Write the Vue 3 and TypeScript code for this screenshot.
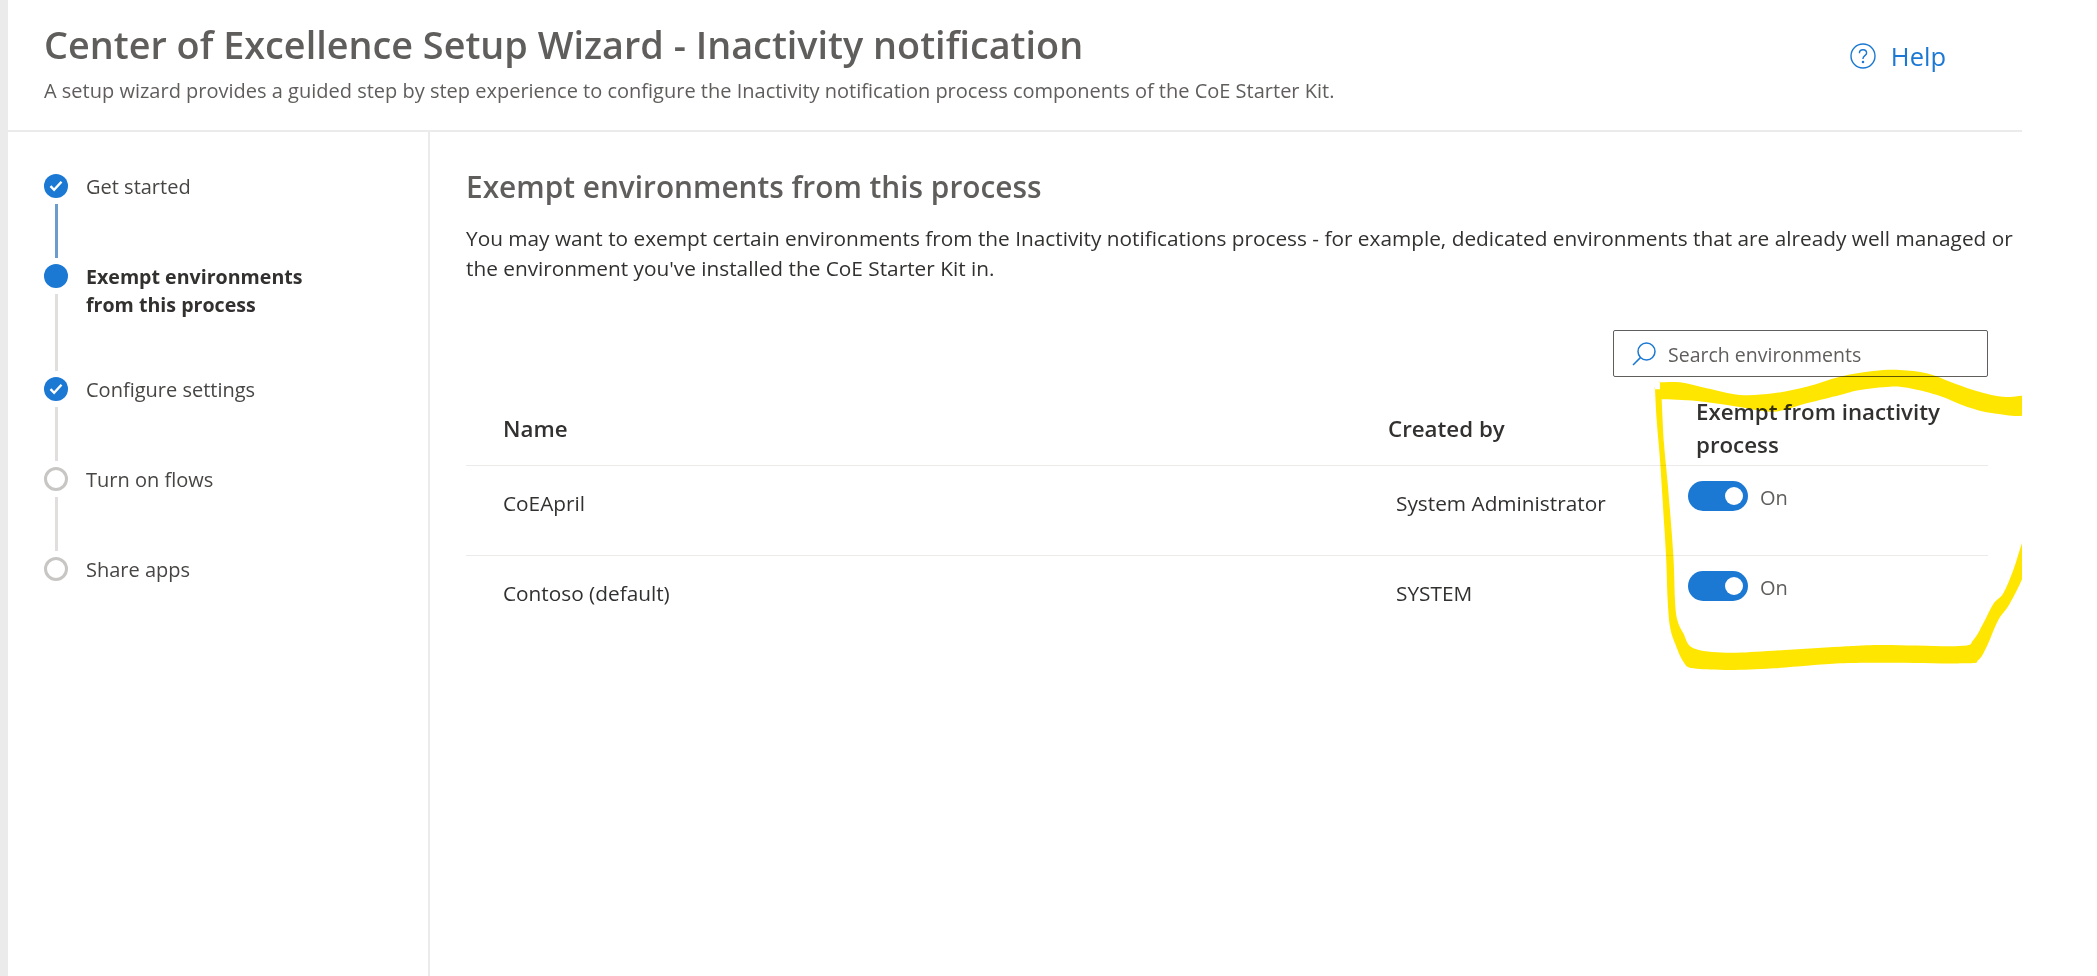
<template>
  <div class="page">
    <header class="top">
      <div>
        <h1>Center of Excellence Setup Wizard - Inactivity notification</h1>
        <p class="sub">A setup wizard provides a guided step by step experience to configure the Inactivity notification process components of the CoE Starter Kit.</p>
      </div>
      <a class="help">
        <svg width="26" height="26" viewBox="0 0 26 26" fill="none" stroke="#1b78d3" stroke-width="1.4">
          <circle cx="13" cy="13" r="12" />
          <path d="M9.4 10.2c0-2.1 1.6-3.5 3.6-3.5s3.6 1.3 3.6 3.2c0 2.7-3.6 2.8-3.6 5.6v.6" />
          <circle cx="13" cy="19" r="0.6" fill="#1b78d3" />
        </svg>
        Help
      </a>
    </header>

    <div class="body">
      <nav class="steps">
        <div v-for="(s, i) in steps" :key="s.label" class="step" :class="{ tall: s.current }">
          <div class="rail">
            <span class="dot" :class="s.state">
              <svg v-if="s.state === 'done'" width="14" height="12" viewBox="0 0 14 12" fill="none" stroke="#fff" stroke-width="2.4">
                <path d="M1.5 6.2l3.6 3.6 7.4-8" />
              </svg>
            </span>
            <span v-if="i < steps.length - 1" class="link" :class="{ passed: i === 0 }"></span>
          </div>
          <span class="label" :class="{ current: s.current }">{{ s.label }}</span>
        </div>
      </nav>

      <main class="content">
        <h2>Exempt environments from this process</h2>
        <p class="intro">You may want to exempt certain environments from the Inactivity notifications process - for example, dedicated environments that are already well managed or<br />the environment you've installed the CoE Starter Kit in.</p>

        <div class="table-wrap">
          <div class="search">
            <svg width="24" height="24" viewBox="0 0 24 24" fill="none" stroke="#1b78d3" stroke-width="1.5">
              <circle cx="14.5" cy="9.5" r="8.5" />
              <path d="M8.4 15.6L1 23" />
            </svg>
            <input type="text" placeholder="Search environments" />
          </div>

          <div class="row head">
            <div class="name">Name</div>
            <div>Created by</div>
            <div class="pad">Exempt from inactivity process</div>
          </div>
          <div v-for="env in environments" :key="env.name" class="row">
            <div class="name">{{ env.name }}</div>
            <div class="pad">{{ env.owner }}</div>
            <div class="toggle-cell">
              <span class="toggle"><span class="knob"></span></span>
              <span class="on">On</span>
            </div>
          </div>
        </div>
      </main>
    </div>

    <!-- yellow marker scribble on top of the screenshot -->
    <svg class="marker" width="422" height="400" viewBox="0 0 1266 1200">
      <path :d="markerPath" fill="#ffe600" />
    </svg>
  </div>
</template>

<script setup lang="ts">
type Step = { label: string; state: 'done' | 'active' | 'todo'; current?: boolean }

const steps: Step[] = [
  { label: 'Get started', state: 'done' },
  { label: 'Exempt environments from this process', state: 'active', current: true },
  { label: 'Configure settings', state: 'done' },
  { label: 'Turn on flows', state: 'todo' },
  { label: 'Share apps', state: 'todo' },
]

const environments = [
  { name: 'CoEApril', owner: 'System Administrator' },
  { name: 'Contoso (default)', owner: 'SYSTEM' },
]

// outline of the marker stroke, smoothed below (corners are doubled to keep them sharp)
const outline: [number, number][] = [
  [165, 268], [165, 268], [180, 268], [180, 268], [180, 247], [180, 247], [240, 247], [320, 265], [420, 285], [520, 280],
  [620, 260], [720, 230], [820, 213], [900, 210], [980, 220], [1050, 245], [1120, 270], [1190, 288], [1230, 291], [1275, 291],
  [1275, 345], [1180, 340], [1100, 320], [1020, 288], [930, 265], [870, 260], [780, 270], [720, 285],
  [620, 310], [520, 335], [400, 318], [290, 303], [185, 298], [185, 298],
  [192, 430], [204, 560], [220, 765], [225, 900], [232, 960], [250, 1000], [280, 1045], [380, 1058], [520, 1052],
  [720, 1040], [850, 1035], [1080, 1038], [1120, 1020], [1150, 970], [1180, 912], [1210, 880], [1240, 810], [1275, 710],
  [1275, 810], [1230, 910], [1195, 960], [1160, 1040], [1135, 1080], [1100, 1090], [870, 1088],
  [720, 1090], [520, 1105], [390, 1110], [280, 1105], [250, 1085], [225, 1030], [210, 980], [203, 900],
  [198, 765], [189, 620], [180, 480], [170, 360],
]

const smooth = (pts: [number, number][]) => {
  let d = `M${pts[0][0]} ${pts[0][1]}`
  for (let i = 0; i < pts.length; i++) {
    const a = pts[(i - 1 + pts.length) % pts.length]
    const b = pts[i]
    const c = pts[(i + 1) % pts.length]
    const e = pts[(i + 2) % pts.length]
    const c1 = [b[0] + (c[0] - a[0]) / 6, b[1] + (c[1] - a[1]) / 6]
    const c2 = [c[0] - (e[0] - b[0]) / 6, c[1] - (e[1] - b[1]) / 6]
    d += `C${c1[0]} ${c1[1]} ${c2[0]} ${c2[1]} ${c[0]} ${c[1]}`
  }
  return d + 'Z'
}

const markerPath = smooth(outline)
</script>

<style>
html,
body {
  background: #fff;
}
</style>

<style scoped>
.page {
  position: relative;
  box-sizing: border-box;
  width: 2022px;
  height: 976px;
  border-left: 8px solid #ebebeb;
  display: flex;
  flex-direction: column;
  font-family: "Open Sans", "Liberation Sans", sans-serif;
  font-size: 20px;
  color: #323130;
  overflow: hidden;
}

.top {
  flex: none;
  box-sizing: border-box;
  border-bottom: 2px solid #ebebeb;
  height: 132px;
  padding: 21px 76px 0 36px;
  display: flex;
  justify-content: space-between;
}

h1 {
  margin: 0;
  font-size: 37.8px;
  line-height: 48px;
  font-weight: 600;
  color: #605e5c;
}

.sub {
  margin: 9px 0 0;
  font-size: 20px;
  line-height: 26px;
  color: #605e5c;
}

.help {
  display: flex;
  align-items: center;
  gap: 15px;
  height: 30px;
  margin-top: 20px;
  font-size: 25.5px;
  color: #1b78d3;
}

.body {
  flex: 1;
  display: flex;
}

.steps {
  width: 422px;
  flex: none;
  box-sizing: border-box;
  border-right: 2px solid #ebebeb;
  padding: 42px 0 0 36px;
}

.step {
  display: flex;
  gap: 18px;
  height: 90px;
}

.step.tall {
  height: 113px;
}

.rail {
  width: 24px;
  display: flex;
  flex-direction: column;
  align-items: center;
}

.dot {
  width: 24px;
  height: 24px;
  flex: none;
  box-sizing: border-box;
  border-radius: 50%;
  display: flex;
  align-items: center;
  justify-content: center;
  background: #1b78d3;
}

.dot.todo {
  background: #fff;
  border: 3px solid #c8c6c4;
}

.link {
  width: 3px;
  flex: 1;
  margin: 6px 0;
  background: #e1dfdd;
}

.link.passed {
  background: #6c9cc9;
}

.label {
  width: 250px;
  margin-top: -1px;
  line-height: 28px;
  color: #484644;
}

.label.current {
  font-size: 19.6px;
  font-weight: 700;
  color: #323130;
}

.content {
  flex: 1;
  padding: 37px 34px 0 36px;
}

h2 {
  margin: 0;
  font-size: 29.8px;
  line-height: 36px;
  font-weight: 600;
  color: #605e5c;
}

.intro {
  margin: 18px 0 0;
  font-size: 20.8px;
  line-height: 30px;
  white-space: nowrap;
  color: #323130;
}

.table-wrap {
  margin-top: 47px;
  width: 1522px;
}

.search {
  box-sizing: border-box;
  width: 375px;
  height: 47px;
  margin-left: auto;
  border: 1px solid #605e5c;
  border-radius: 2px;
  display: flex;
  align-items: center;
  gap: 12px;
  padding-left: 18px;
  font-size: 19.5px;
}

.search input {
  flex: 1;
  min-width: 0;
  border: 0;
  outline: 0;
  padding: 1px 0 0;
  background: transparent;
  font: inherit;
  color: #605e5c;
}

.search input::placeholder {
  color: #605e5c;
  opacity: 1;
}

.row {
  display: grid;
  grid-template-columns: 922px 300px 300px;
  box-sizing: border-box;
  height: 90px;
  padding-top: 23px;
  font-size: 20.8px;
  line-height: 28px;
  border-bottom: 1px solid #edebe9;
}

.row:last-child {
  border-bottom: 0;
}

.row.head {
  height: 89px;
  padding: 18px 0 4px;
  line-height: 33px;
  align-items: center;
  font-weight: 600;
  font-size: 22.3px;
}

.name {
  padding-left: 37px;
}

.pad {
  padding-left: 8px;
}

.toggle-cell {
  display: flex;
  gap: 12px;
  margin-top: -8px;
  font-size: 20px;
  color: #605e5c;
}

.toggle {
  position: relative;
  width: 60px;
  height: 30px;
  border-radius: 15px;
  background: #1b78d3;
}

.knob {
  position: absolute;
  top: 6px;
  right: 5px;
  width: 18px;
  height: 18px;
  border-radius: 50%;
  background: #fff;
}

.on {
  line-height: 34px;
}

.marker {
  position: absolute;
  left: 1592px;
  top: 300px;
  mix-blend-mode: multiply;
  pointer-events: none;
}
</style>
